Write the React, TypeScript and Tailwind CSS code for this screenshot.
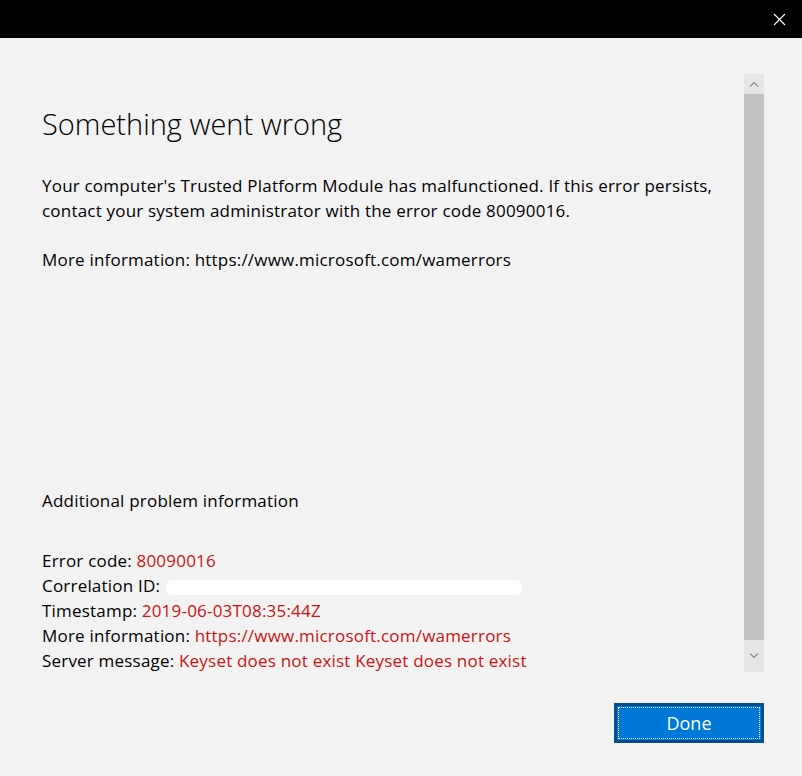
import React from 'react';

const font = { fontFamily: '"Open Sans", "Noto Sans", sans-serif' };

export default function App() {
  return (
    <div className="w-[802px] h-[776px] bg-[#f2f2f2] flex flex-col overflow-hidden text-black" style={font}>
      {/* Title bar */}
      <div className="h-[38px] bg-black flex justify-end items-center shrink-0">
        <div className="w-[46px] h-[38px] flex items-center justify-center">
          <svg width="13" height="13" viewBox="0 0 13 13">
            <path d="M1 1L12 12M12 1L1 12" stroke="#fff" strokeWidth="1.1" />
          </svg>
        </div>
      </div>

      <div className="flex h-[634px] shrink-0">
        {/* Content */}
        <div className="flex-1 flex flex-col pl-[42px] text-[17px] leading-[25px] tracking-[0.2px]">
          <h1 className="text-[29px] font-light mt-[69px] leading-[34px] tracking-normal">Something went wrong</h1>
          <p className="mt-[32px]">
            Your computer's Trusted Platform Module has malfunctioned. If this error persists,
            <br />
            contact your system administrator with the error code 80090016.
          </p>
          <p className="mt-[24px]">More information: https://www.microsoft.com/wamerrors</p>

          <p className="mt-[216px]">Additional problem information</p>

          <div className="mt-[35px]">
            <div>
              Error code: <span className="text-[#c81414]">80090016</span>
            </div>
            <div className="flex items-center">
              <span>Correlation ID:</span>
              <span className="ml-[6px] h-[15px] w-[356px] bg-white rounded-[6px] mt-[4px]" />
            </div>
            <div>
              Timestamp: <span className="text-[#c81414]">2019-06-03T08:35:44Z</span>
            </div>
            <div>
              More information: <span className="text-[#c81414]">https://www.microsoft.com/wamerrors</span>
            </div>
            <div>
              Server message: <span className="text-[#c81414]">Keyset does not exist Keyset does not exist</span>
            </div>
          </div>
        </div>

        {/* Scrollbar */}
        <div className="w-[58px] pt-[36px] pr-[38px] shrink-0">
          <div className="w-[20px] h-[598px] flex flex-col bg-[#e6e6e6]">
            <div className="h-[20px] flex items-center justify-center">
              <svg width="10" height="6" viewBox="0 0 10 6">
                <path d="M1 5.5L5 1.5L9 5.5" stroke="#8a8a8a" strokeWidth="1.2" fill="none" />
              </svg>
            </div>
            <div className="flex-1 bg-[#c2c2c2]" />
            <div className="h-[32px] flex items-center justify-center">
              <svg width="10" height="6" viewBox="0 0 10 6">
                <path d="M1 0.5L5 4.5L9 0.5" stroke="#8a8a8a" strokeWidth="1.2" fill="none" />
              </svg>
            </div>
          </div>
        </div>
      </div>

      <div className="flex justify-end pr-[38px] mt-[31px]">
        <button className="w-[150px] h-[40px] bg-[#0078d7] border-[3px] border-[#004e8c] p-[1px] text-white">
          <div className="w-full h-full border border-dotted border-white flex items-center justify-center text-[18px]">
            Done
          </div>
        </button>
      </div>
    </div>
  );
}
